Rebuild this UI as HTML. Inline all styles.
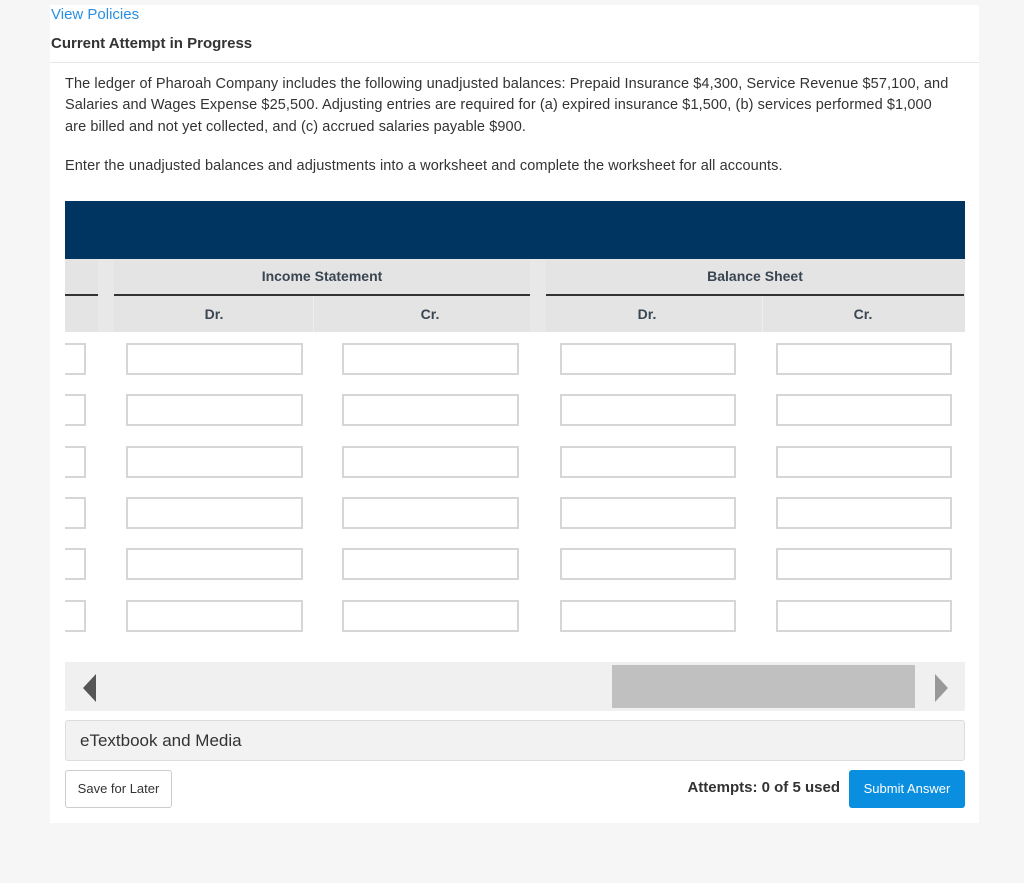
<!DOCTYPE html>
<html><head><meta charset="utf-8"><style>
*{box-sizing:border-box;margin:0;padding:0}
body{width:1024px;height:883px;background:#f6f6f6;font-family:"Liberation Sans",sans-serif;color:#333;position:relative;overflow:hidden}
.a{position:absolute}
.panel{left:50px;top:5px;width:929px;height:818px;background:#fff}
.inp{position:absolute;height:32px;border:2px solid #d6d6d6;background:#fff}
.hd{font-size:14px;font-weight:bold;color:#3a4552;text-align:center}
</style></head><body>
<div class="a panel"></div>
<div class="a" style="left:51px;top:6px;font-size:15px;color:#2b8fe0">View Policies</div>
<div class="a" style="left:51px;top:35px;font-size:15px;font-weight:bold;color:#333">Current Attempt in Progress</div>
<div class="a" style="left:50px;top:62px;width:929px;height:1px;background:#e6e6e6"></div>
<div class="a" style="left:65px;top:74px;width:890px;font-size:14.5px;line-height:21.3px;color:#333;letter-spacing:0.1px">The ledger of Pharoah Company includes the following unadjusted balances: Prepaid Insurance $4,300, Service Revenue $57,100, and Salaries and Wages Expense $25,500. Adjusting entries are required for (a) expired insurance $1,500, (b) services performed $1,000 are billed and not yet collected, and (c) accrued salaries payable $900.</div>
<div class="a" style="left:65px;top:158px;font-size:14.5px;color:#333;letter-spacing:0.1px">Enter the unadjusted balances and adjustments into a worksheet and complete the worksheet for all accounts.</div>
<div class="a" style="left:65px;top:201px;width:900px;height:58px;background:#003461"></div>
<div class="a" style="left:65px;top:259px;width:900px;height:73px;background:#e4e4e4"></div>
<div class="a" style="left:98px;top:259px;width:16px;height:73px;background:#e8e8e8"></div>
<div class="a" style="left:530px;top:259px;width:16px;height:73px;background:#e8e8e8"></div>
<div class="a" style="left:313px;top:296px;width:1px;height:36px;background:#eee"></div>
<div class="a" style="left:762px;top:296px;width:1px;height:36px;background:#eee"></div>
<div class="a" style="left:65px;top:294px;width:33px;height:2px;background:#333"></div>
<div class="a" style="left:114px;top:294px;width:416px;height:2px;background:#333"></div>
<div class="a" style="left:546px;top:294px;width:418px;height:2px;background:#333"></div>
<div class="a hd" style="left:114px;top:268px;width:416px">Income Statement</div>
<div class="a hd" style="left:546px;top:268px;width:418px">Balance Sheet</div>
<div class="a hd" style="left:114px;top:306px;width:200px">Dr.</div>
<div class="a hd" style="left:314px;top:306px;width:232px">Cr.</div>
<div class="a hd" style="left:546px;top:306px;width:202px">Dr.</div>
<div class="a hd" style="left:762px;top:306px;width:202px">Cr.</div>
<div id="rows"></div>
<div class="a" style="left:65px;top:662px;width:900px;height:49px;background:#f0f0f0"></div>
<div class="a" style="left:612px;top:665px;width:303px;height:43px;background:#c0c0c0"></div>
<svg class="a" style="left:82px;top:674px" width="16" height="28"><polygon points="14,0 14,28 1,14" fill="#555"/></svg>
<svg class="a" style="left:933px;top:674px" width="16" height="28"><polygon points="2,0 2,28 15,14" fill="#999"/></svg>
<div class="a" style="left:65px;top:720px;width:900px;height:41px;background:#f2f2f2;border:1px solid #ddd;border-radius:3px;font-size:17px;line-height:40px;padding-left:14px;color:#333">eTextbook and Media</div>
<div class="a" style="left:65px;top:770px;width:107px;height:38px;background:#fff;border:1px solid #ccc;border-radius:3px;font-size:13px;line-height:36px;text-align:center;color:#333">Save for Later</div>
<div class="a" style="left:640px;top:779px;width:200px;text-align:right;font-size:15px;font-weight:bold;color:#333">Attempts: 0 of 5 used</div>
<div class="a" style="left:849px;top:770px;width:116px;height:38px;background:#0a8ee0;border-radius:3px;font-size:13px;line-height:38px;text-align:center;color:#fff">Submit Answer</div>
<script>
var h='',ys=[343,394,446,497,548,600];
ys.forEach(function(y){
h+='<div class="inp" style="left:58px;top:'+y+'px;width:28px"></div>';
[[126,177],[342,177],[560,176],[776,176]].forEach(function(c){h+='<div class="inp" style="left:'+c[0]+'px;top:'+y+'px;width:'+c[1]+'px"></div>';});
});
document.getElementById('rows').innerHTML=h;
</script>
<div class="a" style="left:50px;top:330px;width:15px;height:320px;background:#fff"></div>
</body></html>
